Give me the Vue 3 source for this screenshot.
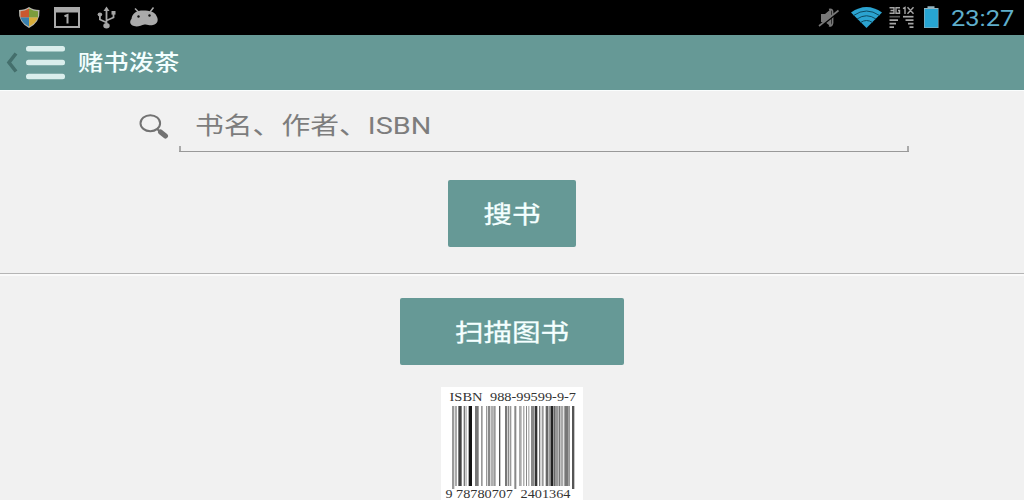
<template>
  <div class="screen">
    <div class="status-bar">
      <svg class="status-icons" width="170" height="35" viewBox="0 0 170 35">
        <!-- bouclier -->
        <path d="M29 7 Q33 10 39.500 10 Q40.500 22 29 28 Q18 22 19 10 Q25 10 29 7Z" fill="#b9b9b0" />
        <path d="M29 8.500 Q25 11 20.500 11.200 V17.500 H29Z" fill="#c9572f" />
        <path d="M29 8.500 Q33 11 38 11.200 V17.500 H29Z" fill="#7c9d3c" />
        <path d="M20.500 17.500 H29 V26.500 Q22 23 20.500 17.500Z" fill="#377fae" />
        <path d="M38 17.500 H29 V26.500 Q36 23 38 17.500Z" fill="#d9ad3a" />
        <!-- calendrier -->
        <path d="M54 7 H80 V28 H54Z M56 12.500 V26 H78 V12.500Z" fill="#aaa" fill-rule="evenodd" />
        <path d="M64.500 16.200 L67.500 15 V23.500" fill="none" stroke="#aaa" stroke-width="2" />
        <!-- usb -->
        <g fill="none" stroke="#a6a6a6" stroke-width="1.800">
          <path d="M106.500 10 V25 M106.500 22.500 L99.900 19.500 V15 M106.500 20.500 L113.500 17.500 V13" />
        </g>
        <path d="M106.500 6.500 L109.500 11 H103.500Z" fill="#a6a6a6" />
        <ellipse cx="106.500" cy="25.800" rx="3.200" ry="2.700" fill="#a6a6a6" />
        <ellipse cx="99.900" cy="14.500" rx="2.300" ry="2" fill="#a6a6a6" />
        <rect x="111.500" y="11" width="4" height="3.600" fill="#a6a6a6" />
        <!-- android -->
        <g fill="#aaa">
          <path d="M131.500 19 C132 13 137 10.500 143 10.500 C150 10.500 155 12 156.500 16 C159 20 157.500 24 153 25 C149 26 148 24 144.500 24.500 C141 25 138 27.500 134 26 C129.500 25 129.500 21 131.500 19Z" />
          <path d="M135 8.500 L139 12.500 M153.500 7.500 L150 12" stroke="#aaa" stroke-width="1.500" />
        </g>
        <circle cx="138.500" cy="16.500" r="1.200" fill="#111" />
        <circle cx="149.500" cy="15.500" r="1.200" fill="#111" />
      </svg>
      <div class="status-right">
        <svg width="132" height="35" viewBox="812 0 132 35">
          <!-- muet -->
          <g stroke="#777" fill="#777">
            <path d="M821 14 H825 L831 9 V26.500 L825 22 H821Z" stroke="none" />
            <path d="M829 9.500 Q833 8.500 832.500 13 V23 Q832 27 829 25.500" fill="none" stroke-width="1.800" />
            <path d="M819 27.500 L838.500 12" stroke="#000" stroke-width="2" />
            <path d="M819 26 L838.500 10.500" stroke-width="1.600" />
          </g>
          <!-- wifi -->
          <path d="M866.500 28 L851 12.500 Q866.500 1.500 882 12.500Z" fill="#2ba3d0" />
          <g fill="none" stroke="#0d4a61" stroke-width="1">
            <path d="M853.500 15.500 Q866.500 6.500 879.500 15.500" />
            <path d="M857 19 Q866.500 12.500 876 19" />
            <path d="M860.500 22.500 Q866.500 18.500 872.500 22.500" />
          </g>
          <!-- signal -->
          <g fill="none" stroke="#a5a5a5" stroke-width="1.400">
            <path d="M889.500 7.700 H894 V13.300 H889.500 M890.500 10.500 H894 M900 7.700 H896 V13.300 H899.500 V10.500 H898" />
            <path d="M903 8.700 L905 7.500 V14 M907.500 7.200 L913.500 13.800 M913.500 7.200 L907.500 13.800" />
          </g>
          <g stroke-width="1.700">
            <path d="M889.500 16.700 H900" stroke="#555" />
            <path d="M903 16.700 H913.500" stroke="#a5a5a5" />
            <path d="M889.500 20.200 H898 M905.500 20.200 H913.500 M889.500 23.700 H896 M908 23.700 H913.500 M889.500 27.200 H894 M909.500 27.200 H913.500" stroke="#a5a5a5" />
          </g>
          <!-- batterie -->
          <path d="M924 8 H927.500 V6.300 H934.500 V8 H938.500 V28 H924Z" fill="#93b3bf" />
          <rect x="924.700" y="9" width="13.200" height="18.400" fill="#27a5d3" />
        </svg>
        <span class="clock wide">23:27</span>
      </div>
    </div>

    <header class="action-bar">
      <svg width="78" height="55" viewBox="0 35 78 55">
        <path d="M16 53.500 L9 62.500 L16 71.500" fill="none" stroke="#446f6c" stroke-width="3.600" />
        <g fill="#daeeec">
          <rect x="26" y="46" width="39" height="5.500" rx="2.500" />
          <rect x="26" y="59.800" width="39" height="5.500" rx="2.500" />
          <rect x="26" y="73.800" width="39" height="5.500" rx="2.500" />
        </g>
      </svg>
      <h1 class="title wide">赌书泼茶</h1>
    </header>

    <section class="search">
      <div class="search-row">
        <svg class="loupe" width="30" height="28" viewBox="0 0 30 28">
          <ellipse cx="11.300" cy="10.200" rx="9.800" ry="8" fill="none" stroke="#727272" stroke-width="2" />
          <path d="M18 16 L21 18.500" stroke="#727272" stroke-width="2" />
          <path d="M21.500 19 L26.500 23" stroke="#727272" stroke-width="5" stroke-linecap="round" />
        </svg>
        <div class="field">
          <span class="placeholder wide">书名、作者、ISBN</span>
        </div>
      </div>
      <button class="btn btn-search"><span class="wide center">搜书</span></button>
    </section>

    <section class="scan">
      <button class="btn btn-scan"><span class="wide center">扫描图书</span></button>
      <svg class="barcode" width="142" height="113" viewBox="441 387 142 113">
        <rect x="441" y="387" width="142" height="113" fill="#fff" />
        <rect
          v-for="(bar, i) in bars"
          :key="i"
          :x="435 + bar[0] / 3"
          y="406"
          :width="bar[1] / 3"
          :height="bar[3] || 80"
          :fill="bar[2]"
        />
        <g class="barcode-text">
          <text x="449.500" y="401" textLength="33" lengthAdjust="spacingAndGlyphs">ISBN</text>
          <text x="490" y="401" textLength="86" lengthAdjust="spacingAndGlyphs">988-99599-9-7</text>
          <text x="445.500" y="497.500" textLength="7" lengthAdjust="spacingAndGlyphs">9</text>
          <text x="456" y="497.500" textLength="57" lengthAdjust="spacingAndGlyphs">78780707</text>
          <text x="520.500" y="497.500" textLength="50" lengthAdjust="spacingAndGlyphs">2401364</text>
        </g>
      </svg>
    </section>
  </div>
</template>

<script setup>
// position, largeur (en tiers de pixel), couleur, hauteur
const bars = [
  [51, 7, '#999', 83],
  [60, 6, '#aaa'],
  [70, 10, '#444'],
  [86, 5, '#777'],
  [93, 2, '#aaa'],
  [101, 10, '#151515'],
  [120, 11, '#777'],
  [138, 5, '#999'],
  [153, 4, '#999'],
  [159, 7, '#888'],
  [169, 4, '#888'],
  [175, 7, '#999'],
  [192, 4, '#555'],
  [210, 7, '#777'],
  [219, 4, '#888'],
  [225, 4, '#999'],
  [238, 6, '#888', 83],
  [252, 8, '#aaa'],
  [265, 3, '#888'],
  [273, 3, '#888'],
  [280, 3, '#999'],
  [288, 11, '#888'],
  [300, 7, '#333'],
  [312, 4, '#777'],
  [320, 6, '#999'],
  [332, 7, '#666'],
  [340, 7, '#999'],
  [347, 8, '#222'],
  [356, 6, '#666'],
  [363, 8, '#999'],
  [372, 4, '#777'],
  [377, 8, '#aaa'],
  [388, 13, '#777'],
  [402, 3, '#999'],
  [411, 7, '#555', 83]
]
</script>

<style>
body {
  margin: 0;
}
</style>

<style scoped>
.screen {
  display: flex;
  flex-direction: column;
  width: 1024px;
  height: 500px;
  overflow: hidden;
  background: #f1f1f1;
  font-family: Roboto, "Noto Sans CJK SC", sans-serif;
}

/* Texte élargi horizontalement */
.wide {
  display: inline-block;
  white-space: nowrap;
  transform: scaleX(1.19);
  transform-origin: left center;
}

.wide.center {
  transform-origin: center;
}

.status-bar {
  display: flex;
  justify-content: space-between;
  height: 35px;
  background: #000;
}

.status-right {
  display: flex;
  width: 212px;
}

.wide.clock {
  margin-left: 7px;
  font-size: 22.500px;
  line-height: 36px;
  color: #5faecb;
  transform: scaleX(1.13);
}

.action-bar {
  display: flex;
  height: 55px;
  background: #669996;
  border-bottom: 1px solid #fafdfd;
}

.title {
  margin: 0;
  font-size: 21.300px;
  line-height: 56px;
  font-weight: 500;
  color: #f4ffff;
}

.search {
  display: flex;
  flex-direction: column;
  align-items: center;
  height: 182px;
  border-bottom: 1px solid #b5b5b5;
}

.search-row {
  display: flex;
  width: 770px;
  height: 61px;
}

.loupe {
  flex: none;
  margin: 22px 10px 0 12px;
}

.field {
  flex: none;
  width: 730px;
  height: 60px;
  border-bottom: 1px solid #999;
  background:
    linear-gradient(#aaa, #aaa) left bottom / 2px 5px no-repeat,
    linear-gradient(#aaa, #aaa) right bottom / 2px 5px no-repeat;
}

.wide.placeholder {
  margin-left: 16px;
  font-size: 24px;
  line-height: 70px;
  color: #7d7d7d;
  transform: scaleX(1.2);
}

.btn {
  padding: 3px 0 0;
  border: none;
  border-radius: 2px;
  background: #669996;
  color: #f4ffff;
  font-family: inherit;
  font-size: 24px;
  line-height: 64px;
}

.btn .wide {
  -webkit-text-stroke: 0.3px #f4ffff;
}

.btn-search {
  width: 128px;
  height: 67px;
  margin-top: 28px;
}

.scan {
  display: flex;
  flex-direction: column;
  align-items: center;
  flex: 1;
  border-top: 2px solid #fafafa;
}

.btn-scan {
  width: 224px;
  height: 67px;
  margin-top: 22px;
}

.barcode {
  flex: none;
  margin-top: 22px;
}

.barcode-text {
  font-family: "Liberation Serif", serif;
  font-size: 13px;
  fill: #333;
}
</style>
